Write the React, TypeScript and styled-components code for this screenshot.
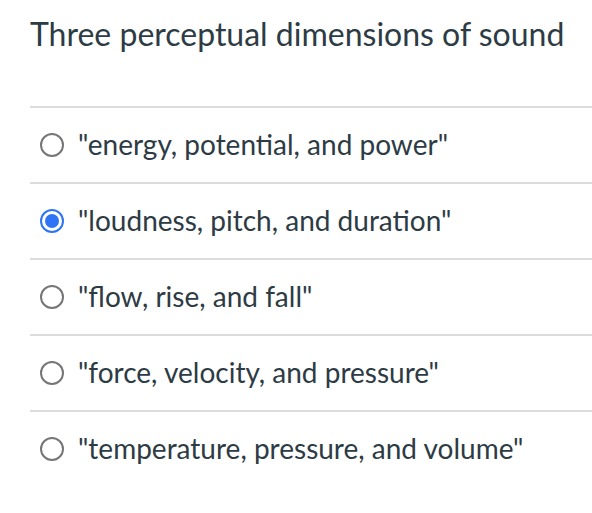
import React, { useState } from 'react';
import styled, { createGlobalStyle } from 'styled-components';

const GlobalStyle = createGlobalStyle`
  html, body {
    margin: 0;
    padding: 0;
    background: #ffffff;
  }
  body {
    font-family: Lato, "Open Sans", sans-serif;
    color: #2d3b45;
  }
`;

const Wrapper = styled.section`
  padding: 13px 0 0 30px;
`;

const Heading = styled.h2`
  margin: 0;
  font-size: 32px;
  font-weight: 400;
  line-height: 42px;
  color: #2d3b45;
`;

const Answers = styled.div`
  margin-top: 51px;
  border-top: 2px solid #dcdcdc;
`;

const Answer = styled.label`
  display: flex;
  align-items: center;
  height: 74px;
  padding-left: 10px;
  gap: 14px;
  font-size: 28px;
  line-height: 1;
  cursor: pointer;

  & + & {
    border-top: 2px solid #dcdcdc;
  }
`;

const Radio = styled.span<{ $checked: boolean }>`
  box-sizing: border-box;
  width: 24px;
  height: 24px;
  border-radius: 50%;
  border: 2px solid ${({ $checked }) => ($checked ? '#2f74f5' : '#767676')};
  display: flex;
  align-items: center;
  justify-content: center;
  flex-shrink: 0;

  &::after {
    content: '';
    width: 14px;
    height: 14px;
    border-radius: 50%;
    background: ${({ $checked }) => ($checked ? '#2f74f5' : 'transparent')};
  }
`;

const Label = styled.span`
  padding-bottom: 2px;
`;

const HiddenInput = styled.input`
  display: none;
`;

const options = [
  '"energy, potential, and power"',
  '"loudness, pitch, and duration"',
  '"flow, rise, and fall"',
  '"force, velocity, and pressure"',
  '"temperature, pressure, and volume"',
];

export default function App() {
  const [selected, setSelected] = useState(1);

  return (
    <>
      <GlobalStyle />
      <Wrapper>
        <Heading>Three perceptual dimensions of sound</Heading>
        <Answers>
          {options.map((text, i) => (
            <Answer key={text}>
              <HiddenInput
                type="radio"
                name="answer"
                checked={selected === i}
                onChange={() => setSelected(i)}
              />
              <Radio $checked={selected === i} />
              <Label>{text}</Label>
            </Answer>
          ))}
        </Answers>
      </Wrapper>
    </>
  );
}
